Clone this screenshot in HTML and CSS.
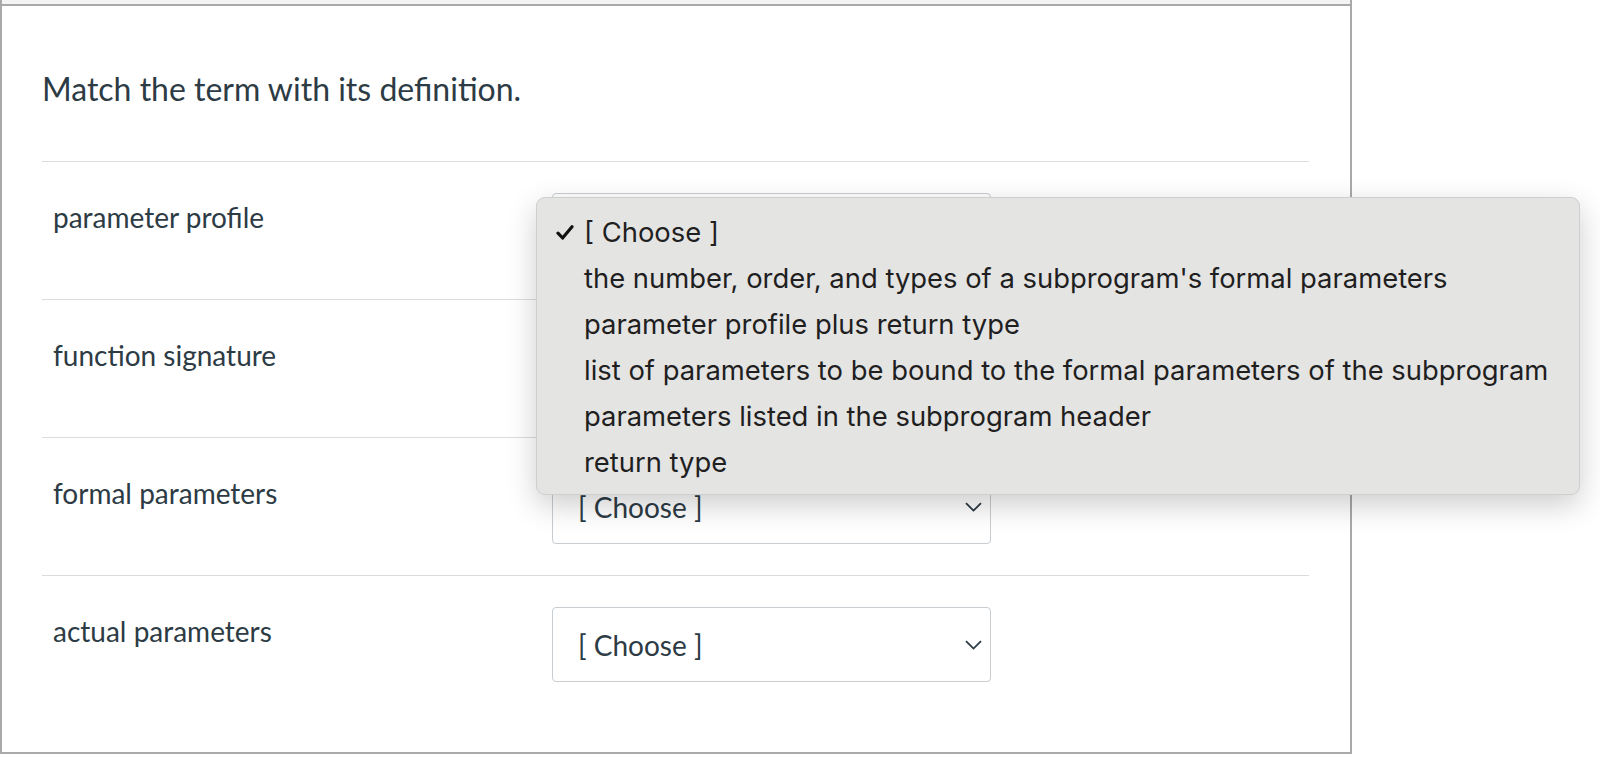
FILE: index.html
```html
<!DOCTYPE html>
<html lang="en">
	<head>
		<meta charset="UTF-8" />
		<meta name="viewport" content="width=device-width, initial-scale=1.0" />
		<title>Quiz question</title>
		<link rel="stylesheet" href="styles.css">
	</head>
	<body>
		<div class="quiz">
			<div class="quiz-top"></div>

			<!-- Matching question -->
			<div class="question">
				<p class="question-text">Match the term with its definition.</p>
				<div class="answers">
					<div class="answer">
						<div class="term">parameter profile</div>
						<div class="select">
							<span>[ Choose ]</span>
							<svg class="chevron" width="17" height="10" viewBox="0 0 17 10"><path d="M1 1.2 L8.5 8.6 L16 1.2" /></svg>
						</div>
					</div>
					<div class="answer">
						<div class="term">function signature</div>
						<div class="select">
							<span>[ Choose ]</span>
							<svg class="chevron" width="17" height="10" viewBox="0 0 17 10"><path d="M1 1.2 L8.5 8.6 L16 1.2" /></svg>
						</div>
					</div>
					<div class="answer">
						<div class="term">formal parameters</div>
						<div class="select">
							<span>[ Choose ]</span>
							<svg class="chevron" width="17" height="10" viewBox="0 0 17 10"><path d="M1 1.2 L8.5 8.6 L16 1.2" /></svg>
						</div>
					</div>
					<div class="answer">
						<div class="term">actual parameters</div>
						<div class="select">
							<span>[ Choose ]</span>
							<svg class="chevron" width="17" height="10" viewBox="0 0 17 10"><path d="M1 1.2 L8.5 8.6 L16 1.2" /></svg>
						</div>
					</div>
				</div>
			</div>

			<!-- Open dropdown of the first select -->
			<ul class="menu">
				<li class="selected">
					<svg class="check" width="18" height="15" viewBox="0 0 18 15"><path d="M2 8.2 L6.6 13 L16 1.8" /></svg>
					[ Choose ]
				</li>
				<li>the number, order, and types of a subprogram's formal parameters</li>
				<li>parameter profile plus return type</li>
				<li>list of parameters to be bound to the formal parameters of the subprogram</li>
				<li>parameters listed in the subprogram header</li>
				<li>return type</li>
			</ul>
		</div>
	</body>
</html>
```

FILE: styles.css
```css
body {
	margin: 0;
	background-color: #fff;
	font-family: Lato, "Noto Sans", sans-serif;
	color: #2d3b45;
}
.quiz {
	position: relative;
	width: 1348px;
	border: 2px solid #a9a9a9;
	border-top: none;
}
.quiz-top {
	height: 4px;
	background: #f4f4f4;
	border-bottom: 2px solid #a9a9a9;
}
.question {
	padding: 0 41px 39px 40px;
}
.question-text {
	margin: 0 0 53px;
	padding-top: 64px;
	font-size: 32px;
	line-height: 38px;
}
.answer {
	display: flex;
	border-top: 1px solid #dcdcdc;
	padding: 31px 0;
}
.term {
	box-sizing: border-box;
	width: 510px;
	padding: 10px 0 0 11px;
	font-size: 28px;
	line-height: 29px;
}
.select {
	box-sizing: border-box;
	width: 439px;
	height: 75px;
	border: 1px solid #c7cdd1;
	border-radius: 4px;
	display: flex;
	align-items: center;
	justify-content: space-between;
	padding: 0 8px 0 25px;
	font-size: 28px;
}
.chevron path {
	fill: none;
	stroke: #2d3b45;
	stroke-width: 1.8;
}
.menu {
	position: absolute;
	left: 534px;
	top: 197px;
	box-sizing: border-box;
	width: 1044px;
	height: 298px;
	margin: 0;
	padding: 11px 0 0;
	list-style: none;
	background: #e4e4e3;
	border: 1px solid #cfcfcf;
	border-radius: 9px;
	box-shadow: 0 10px 30px rgba(0, 0, 0, 0.2);
	font-family: Inter, "Liberation Sans", sans-serif;
	font-size: 27.4px;
	color: #1f1f1f;
}
.menu li {
	position: relative;
	height: 46px;
	line-height: 46px;
	padding-left: 47px;
	white-space: nowrap;
}
.check {
	position: absolute;
	left: 19px;
	top: 16px;
}
.check path {
	fill: none;
	stroke: #111;
	stroke-width: 3.2;
	stroke-linecap: round;
	stroke-linejoin: round;
}
```
